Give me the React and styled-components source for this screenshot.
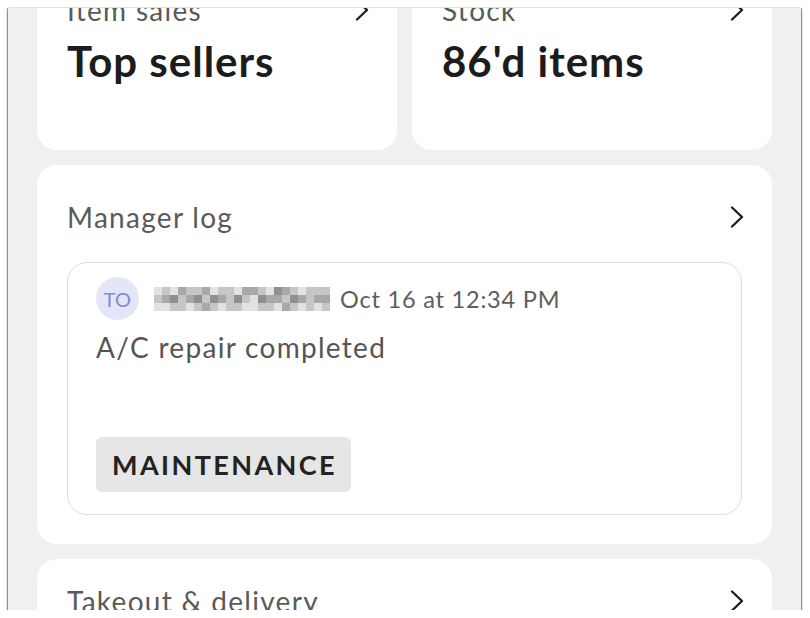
import React from 'react'
import styled, { createGlobalStyle } from 'styled-components'

const Global = createGlobalStyle`
  html, body { margin: 0; padding: 0; background: #fff; }
  body { font-family: Lato, "Liberation Sans", sans-serif; }
`

const Frame = styled.div`
  margin: 8px 9px 0 8px;
  height: 602px;
  background: #f0f0f0;
  overflow: hidden;
  box-shadow: -1px 0 1px rgba(0,0,0,0.35), 1px 0 1px rgba(0,0,0,0.35), 0 2px 2px rgba(0,0,0,0.4);
`

const Scroll = styled.div`
  margin-top: -50px;
  padding: 0 29px;
  display: flex;
  flex-direction: column;
  gap: 15px;
`

const Row = styled.div`
  display: grid;
  grid-template-columns: 1fr 1fr;
  gap: 15px;
`

const Card = styled.div`
  background: #fff;
  border-radius: 20px;
  padding: ${p => p.$top || 34}px 30px 29px 30px;
  height: ${p => p.$h || 'auto'};
  box-sizing: border-box;
`

const CardHead = styled.div`
  display: flex;
  align-items: center;
  justify-content: space-between;
  height: 36px;
`

const Label = styled.div`
  font-size: 28px;
  line-height: 36px;
  color: #5a5a5a;
  letter-spacing: 1.3px;
`

const Big = styled.div`
  margin-top: 6px;
  font-size: 42px;
  line-height: 54px;
  font-weight: 700;
  color: #1c1c1c;
  letter-spacing: 1px;
`

const Chev = styled.svg`
  width: 14px;
  height: 22px;
  margin-right: -2px;
  flex: none;
`

const LogCard = styled.div`
  margin-top: 27px;
  border: 1px solid #dedede;
  border-radius: 20px;
  padding: 14px 28px 22px 28px;
`

const Meta = styled.div`
  display: flex;
  align-items: center;
  gap: 15px;
`

const Avatar = styled.div`
  width: 43px;
  height: 43px;
  border-radius: 50%;
  background: #e3e6f6;
  color: #7d8dd3;
  font-size: 20px;
  display: flex;
  align-items: center;
  justify-content: center;
  letter-spacing: 0.5px;
`

const Mosaic = styled.div`
  display: grid;
  grid-template-columns: repeat(22, 8px);
  grid-auto-rows: 8px;
  width: 176px;
  height: 24px;
  filter: blur(0.7px);
`

const Cell = styled.div`
  background: ${p => p.$c};
`

const DateText = styled.span`
  font-size: 23.5px;
  line-height: 28px;
  color: #5e5e5e;
  letter-spacing: 0.8px;
  margin-left: -5px;
`

const Body = styled.div`
  margin-top: 10px;
  font-size: 28px;
  line-height: 34px;
  color: #555;
  letter-spacing: 1.3px;
`

const Tag = styled.div`
  width: fit-content;
  margin-top: 73px;
  background: #e6e6e6;
  border-radius: 6px;
  padding: 11px 14px 11px 16px;
  font-size: 27px;
  line-height: 33px;
  font-weight: 700;
  letter-spacing: 2.4px;
  color: #222;
`

const Chevron = () => (
  <Chev viewBox="0 0 14 22">
    <polyline points="2,1.5 12,11 2,20.5" fill="none" stroke="#1e1e1e" strokeWidth="2.3" strokeLinecap="round" strokeLinejoin="round" />
  </Chev>
)

const pattern = [
  'abacbbcabbaccbadcbabbb',
  'bcdbcdbdcbdbadccbdcbcc',
  'aabbabcbabbaabbacbabab',
]
const shades = { a: '#e2e2e2', b: '#c6c6c6', c: '#a8a8a8', d: '#8f8f8f' }

function App() {
  return (
    <>
      <Global />
      <Frame>
        <Scroll>
          <Row>
            <Card $h="192px">
              <CardHead>
                <Label>Item sales</Label>
                <Chevron />
              </CardHead>
              <Big>Top sellers</Big>
            </Card>
            <Card $h="192px">
              <CardHead>
                <Label>Stock</Label>
                <Chevron />
              </CardHead>
              <Big>86'd items</Big>
            </Card>
          </Row>
          <Card>
            <CardHead>
              <Label>Manager log</Label>
              <Chevron />
            </CardHead>
            <LogCard>
              <Meta>
                <Avatar>TO</Avatar>
                <Mosaic>
                  {pattern.join('').split('').map((k, i) => <Cell key={i} $c={shades[k]} />)}
                </Mosaic>
                <DateText>Oct 16 at 12:34 PM</DateText>
              </Meta>
              <Body>A/C repair completed</Body>
              <Tag>MAINTENANCE</Tag>
            </LogCard>
          </Card>
          <Card $h="120px" $top={24}>
            <CardHead>
              <Label>Takeout &amp; delivery</Label>
              <Chevron />
            </CardHead>
          </Card>
        </Scroll>
      </Frame>
    </>
  )
}

export default App
